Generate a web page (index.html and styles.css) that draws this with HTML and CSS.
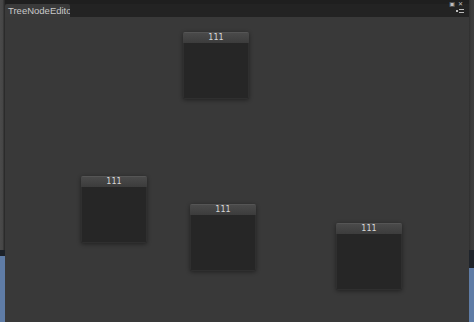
FILE: index.html
```html
<!DOCTYPE html>
<html lang="en">
<head>
    <meta charset="UTF-8">
    <title>TreeNodeEditor</title>
    <link rel="stylesheet" href="styles.css">
</head>
<body>
    <div class="desk">
        <div class="side side-left">
            <div class="side-top"></div>
            <div class="side-band"></div>
            <div class="side-blue"></div>
        </div>
        <div class="window">
            <div class="titlebar">
                <span class="win-btn">&#9635;</span>
                <span class="win-btn">&#10005;</span>
            </div>
            <div class="tabrow">
                <div class="tab">TreeNodeEditor</div>
                <div class="tab-menu">
                    <span class="menu-dot"></span>
                    <span class="menu-lines"></span>
                </div>
            </div>
            <div class="canvas">
                <div class="node" style="left:178px; top:15px;">
                    <div class="node-head">111</div>
                    <div class="node-body"></div>
                </div>
                <div class="node" style="left:76px; top:159px;">
                    <div class="node-head">111</div>
                    <div class="node-body"></div>
                </div>
                <div class="node" style="left:185px; top:187px;">
                    <div class="node-head">111</div>
                    <div class="node-body"></div>
                </div>
                <div class="node" style="left:331px; top:206px;">
                    <div class="node-head">111</div>
                    <div class="node-body"></div>
                </div>
            </div>
        </div>
        <div class="side side-right">
            <div class="side-top"></div>
            <div class="side-band"></div>
            <div class="side-blue"></div>
        </div>
    </div>
</body>
</html>
```
FILE: styles.css
```css
html, body {
    margin: 0;
    padding: 0;
    height: 100%;
    overflow: hidden;
    background-color: #2a2a2a;
    font-family: "DejaVu Sans", Verdana, sans-serif;
}
.desk {
    display: flex;
    height: 322px;
}
.side {
    width: 5px;
    display: flex;
    flex-direction: column;
}
.side-left .side-top {
    flex: 0 0 250px;
    background: linear-gradient(to right, #4a4a4a 0, #454545 3px, #2b2b2b 4px);
}
.side-left .side-band {
    flex: 0 0 6px;
    background-color: #1d2229;
}
.side-right .side-top {
    flex: 0 0 250px;
    background: linear-gradient(to right, #2e2e2e 0, #3b3b3b 2px, #3e3e3e);
}
.side-right .side-band {
    flex: 0 0 18px;
    background-color: #1f242b;
}
.side-blue {
    flex: 1;
    background-color: #5f7ca6;
}
.window {
    flex: 1;
    display: flex;
    flex-direction: column;
    background-color: #393939;
}
.titlebar {
    height: 4px;
    background-color: #1f1f1f;
    display: flex;
    justify-content: flex-end;
    gap: 3px;
    padding-right: 6px;
    overflow: visible;
    position: relative;
    z-index: 1;
}
.win-btn {
    font-size: 6px;
    line-height: 8px;
    height: 8px;
    color: #bdbdbd;
}
.tabrow {
    height: 13px;
    background-color: #232323;
    display: flex;
    align-items: flex-end;
    justify-content: space-between;
}
.tab {
    height: 13px;
    padding: 0 0 0 3px;
    width: 62px;
    background-color: #3a3a3a;
    color: #c8c8c8;
    font-family: "Liberation Sans", Arial, sans-serif;
    font-size: 9.5px;
    line-height: 14px;
    white-space: nowrap;
    overflow: hidden;
    border-radius: 2px 2px 0 0;
}
.tab-menu {
    display: flex;
    align-items: center;
    gap: 1px;
    padding: 0 5px 4px 0;
}
.menu-dot {
    width: 2px;
    height: 2px;
    background-color: #bcbcbc;
}
.menu-lines {
    width: 5px;
    height: 4px;
    border-top: 1px solid #bcbcbc;
    border-bottom: 1px solid #bcbcbc;
    box-sizing: border-box;
}
.canvas {
    flex: 1;
    position: relative;
    background-color: #393939;
}
.node {
    position: absolute;
    width: 66px;
    height: 67px;
    border-radius: 2px;
    box-shadow: 0 1px 4px rgba(0, 0, 0, 0.45);
    display: flex;
    flex-direction: column;
    overflow: hidden;
}
.node-head {
    height: 10px;
    background: linear-gradient(#4a4a4a, #3c3c3c);
    border-top: 1px solid #555555;
    color: #d6d6d6;
    font-size: 8px;
    line-height: 10px;
    text-align: center;
}
.node-body {
    flex: 1;
    background-color: #262626;
    border: 1px solid #2f2f2f;
    border-top: none;
}
```
